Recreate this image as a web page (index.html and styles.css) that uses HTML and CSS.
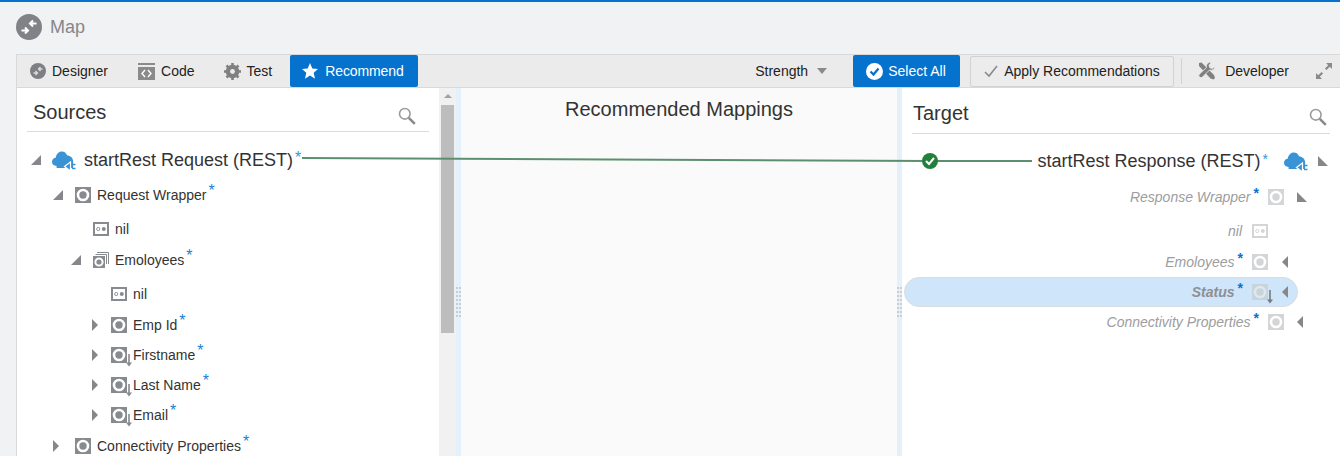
FILE: index.html
```html
<!DOCTYPE html>
<html lang="en">
<head>
<meta charset="utf-8">
<title>Map</title>
<link rel="stylesheet" href="styles.css">
</head>
<body>
<svg class="defs" width="0" height="0" aria-hidden="true">
  <defs>
    <symbol id="i-box" viewBox="0 0 16 16"><rect width="16" height="16" fill="currentColor"/><circle cx="8" cy="8" r="5" fill="currentColor" stroke="#fff" stroke-width="2.6"/></symbol>
    <symbol id="i-arrow" viewBox="0 0 22 22"><rect width="16" height="16" fill="currentColor"/><circle cx="8" cy="8" r="5" fill="currentColor" stroke="#fff" stroke-width="2.6"/><path d="M18 7v11" stroke="currentColor" stroke-width="1.6"/><path d="M15 15.5h6l-3 4z" fill="currentColor"/></symbol>
    <symbol id="i-arrow-f" viewBox="0 0 22 22"><rect width="16" height="16" fill="#c9d3dc"/><circle cx="8" cy="8" r="5" fill="#c9d3dc" stroke="#dfe7ee" stroke-width="2.6"/><path d="M18 6v12" stroke="#777b80" stroke-width="1.6"/><path d="M15 15.5h6l-3 4z" fill="#777b80"/></symbol>
    <symbol id="i-nil" viewBox="0 0 16 16"><rect x="1" y="2" width="14" height="12" fill="#fff" stroke="currentColor" stroke-width="2"/><circle cx="5.2" cy="8" r="1.6" fill="#fff" stroke="currentColor" stroke-width=".9"/><circle cx="10.8" cy="8" r="2" fill="currentColor"/></symbol>
    <symbol id="i-list" viewBox="0 0 16 16"><path d="M4 .5h11.500V12M2.500 2.500h11v9.500" fill="none" stroke="currentColor" stroke-width="1"/><rect y="4" width="12" height="12" fill="currentColor"/><circle cx="6" cy="10" r="3.600" fill="currentColor" stroke="#fff" stroke-width="2"/></symbol>
    <symbol id="i-cloud" viewBox="0 0 24 22"><path transform="translate(0 1.500) scale(.92 1)" d="M5 15.500C1.800 15.500 0 13.600 0 11.300 0 9 1.800 7.400 4 7.300 4.600 3.600 7.400 1 10.600 1c2.800 0 5 1.600 6 4.100 3.300 0 5.900 2.300 6.400 5.400v7H5z" fill="#3a93d5"/><path d="M12.500 17.500l6-4.500v9z" fill="#3a93d5" stroke="#fff" stroke-width="1.200"/><path d="M20 15.500h3.500M20 19.500h3.500" stroke="#3a93d5" stroke-width="1.500"/></symbol>
    <symbol id="i-search" viewBox="0 0 18 18"><circle cx="6.800" cy="6.800" r="5.300" fill="none" stroke="#9a9a9a" stroke-width="1.600"/><path d="M10.800 10.800l6 6" stroke="#8a8a8a" stroke-width="2.600"/></symbol>
  </defs>
</svg>
<div class="page">
  <header class="head">
    <svg class="map-icon" viewBox="0 0 26 26"><circle cx="13" cy="13" r="13" fill="#7f8286"/><path d="M5.500 16.500h6M9 13.500l3 3-3 3M20.500 9.500h-6M17 6.500l-3 3 3 3" fill="none" stroke="#fff" stroke-width="2"/></svg>
    <h1 class="title">Map</h1>
  </header>
  <section class="panel">
    <nav class="bar">
      <a class="tab tab-first"><svg class="t-icon" viewBox="0 0 16 16"><circle cx="8" cy="8" r="8" fill="#7d7f82"/><path d="M3.500 10h3.500M5.500 8l2 2-2 2M12.500 6H9M10.500 4l-2 2 2 2" fill="none" stroke="#ddd" stroke-width="1.300"/></svg>Designer</a>
      <a class="tab"><svg class="t-icon-w" viewBox="0 0 17 17"><rect x="0" y="0" width="17" height="2" fill="#8a8a8a"/><rect x="0" y="4" width="17" height="13" fill="#8a8a8a"/><path d="M7 7l-3 3.500 3 3.500M10 7l3 3.500-3 3.500" fill="none" stroke="#fff" stroke-width="1.400"/></svg>Code</a>
      <a class="tab tab-test"><svg class="t-icon-w" viewBox="0 0 17 17"><circle cx="8.500" cy="8.500" r="5" fill="none" stroke="#808080" stroke-width="3.600"/><path d="M8.500 0v17M0 8.500h17M2.500 2.500l12 12M14.500 2.500l-12 12" stroke="#808080" stroke-width="2.600"/><circle cx="8.500" cy="8.500" r="2.400" fill="#ebebeb"/></svg>Test</a>
      <a class="tab tab-on"><svg class="t-star" viewBox="0 0 16 16"><path d="M8 0l2.300 5.500 5.700.5-4.300 3.800 1.300 5.900L8 12.600l-5 3.100 1.300-5.900L0 6l5.700-.5z" fill="#fff"/></svg>Recommend</a>
      <div class="actions">
        <span class="strength">Strength<i class="drop"></i></span>
        <a class="btn-blue"><svg class="t-icon-w" viewBox="0 0 17 17"><circle cx="8.500" cy="8.500" r="8.500" fill="#fff"/><path d="M4.500 8.500l3 3 5-6" fill="none" stroke="#0572ce" stroke-width="2.200"/></svg>Select All</a>
        <a class="btn-line"><svg class="t-check" viewBox="0 0 14 14"><path d="M1 8l4 4 8-10" fill="none" stroke="#8a8a8a" stroke-width="1.600"/></svg>Apply Recommendations</a>
        <i class="sep"></i>
        <a class="dev"><svg class="t-tools" viewBox="0 0 18 18"><path d="M1 1l2.500-.5L16 13l1 3-1.500 1.500-3-1L1 4z" fill="#808080"/><path d="M17 4.500a4 4 0 0 1-5.500 3.500L4.500 15a2 2 0 0 1-3-3l7-6.500A4 4 0 0 1 13.500.5L11 3.200l.8 2.600 2.700.8z" fill="#808080" stroke="#ebebeb" stroke-width=".8"/></svg>Developer</a>
        <svg class="t-expand" viewBox="0 0 18 18"><path d="M11 1h6v6l-2.200-2.200-3.300 3.300-1.600-1.600 3.300-3.300zM7 17H1v-6l2.200 2.200 3.300-3.300 1.600 1.600-3.300 3.300z" fill="#8a8a8a"/></svg>
      </div>
    </nav>
    <div class="work">
      <div class="col-src">
        <div class="col-head"><h2 class="col-title">Sources</h2><svg class="search"><use href="#i-search"/></svg></div>
        <ul class="tree">
          <li class="row root"><span class="slot"><i class="down"></i></span><svg class="cloud"><use href="#i-cloud"/></svg><span class="root-name">startRest Request (REST)</span><b class="req req-root">*</b></li>
          <li class="row l1 gap-5"><span class="slot"><i class="down"></i></span><svg class="ico"><use href="#i-box"/></svg><span>Request Wrapper</span><b class="req">*</b></li>
          <li class="row l2 gap-4"><span class="slot"></span><svg class="ico"><use href="#i-nil"/></svg><span>nil</span></li>
          <li class="row l2 gap-1"><span class="slot"><i class="down"></i></span><svg class="ico"><use href="#i-list"/></svg><span>Emoloyees</span><b class="req">*</b></li>
          <li class="row l3 gap-4"><span class="slot"></span><svg class="ico"><use href="#i-nil"/></svg><span>nil</span></li>
          <li class="row l3 gap-1"><span class="slot"><i class="right"></i></span><svg class="ico"><use href="#i-box"/></svg><span>Emp Id</span><b class="req">*</b></li>
          <li class="row l3"><span class="slot"><i class="right"></i></span><svg class="ico-a"><use href="#i-arrow"/></svg><span>Firstname</span><b class="req">*</b></li>
          <li class="row l3"><span class="slot"><i class="right"></i></span><svg class="ico-a"><use href="#i-arrow"/></svg><span>Last Name</span><b class="req">*</b></li>
          <li class="row l3"><span class="slot"><i class="right"></i></span><svg class="ico-a"><use href="#i-arrow"/></svg><span>Email</span><b class="req">*</b></li>
          <li class="row l1 gap-1"><span class="slot"><i class="right"></i></span><svg class="ico"><use href="#i-box"/></svg><span>Connectivity Properties</span><b class="req">*</b></li>
        </ul>
      </div>
      <div class="scroll"><i class="up"></i><i class="thumb"></i></div>
      <div class="split"><i class="grip"></i></div>
      <div class="col-mid"><h2 class="mid-title">Recommended Mappings</h2></div>
      <div class="split split-r"><i class="grip"></i></div>
      <div class="col-tgt">
        <div class="col-head tgt-head"><h2 class="col-title">Target</h2><svg class="search"><use href="#i-search"/></svg></div>
        <ul class="tree tree-t">
          <li class="trow t-root"><span class="root-name">startRest Response (REST)</span><b class="req req-root">*</b><svg class="cloud cloud-t"><use href="#i-cloud"/></svg><span class="tslot"><i class="down"></i></span></li>
          <li class="trow t1 gap-6"><em>Response Wrapper</em><b class="req">*</b><svg class="ico fade"><use href="#i-box"/></svg><span class="tslot"><i class="down"></i></span></li>
          <li class="trow t2 gap-4"><em>nil</em><svg class="ico fade nil-t"><use href="#i-nil"/></svg><span class="tslot"></span></li>
          <li class="trow t2 gap-1"><em>Emoloyees</em><b class="req">*</b><svg class="ico fade"><use href="#i-box"/></svg><span class="tslot"><i class="left"></i></span></li>
          <li class="trow t2 pill"><em class="strong">Status</em><b class="req">*</b><svg class="ico-a fade-a"><use href="#i-arrow-f"/></svg><span class="tslot tslot-a"><i class="left"></i></span></li>
          <li class="trow t1"><em>Connectivity Properties</em><b class="req">*</b><svg class="ico fade"><use href="#i-box"/></svg><span class="tslot"><i class="left"></i></span></li>
        </ul>
      </div>
    </div>
    <svg class="links" viewBox="0 0 1340 456" aria-hidden="true">
      <path d="M302 158L930 161H1032" fill="none" stroke="#5d8f6f" stroke-width="2"/>
      <circle cx="930" cy="161" r="8" fill="#23803a"/>
      <path d="M926 161l3 3 5-6" fill="none" stroke="#fff" stroke-width="2"/>
    </svg>
  </section>
</div>
</body>
</html>
```

FILE: styles.css
```css
* { box-sizing: border-box; }
html, body { margin: 0; padding: 0; height: 456px; overflow: hidden; }
body { font-family: "Liberation Sans", Arial, sans-serif; font-size: 14px; color: #333; background: #f1f2f4; }
.defs { display: block; height: 0; }
.page { height: 456px; border-top: 2px solid #0572ce; display: flex; flex-direction: column; }
.head { height: 52px; padding: 12px 0 0 16px; display: flex; align-items: flex-start; gap: 8px; flex: none; }
.map-icon { width: 26px; height: 26px; flex: none; }
.title { margin: 0; font-size: 18px; font-weight: 400; line-height: 26px; color: #85878b; }
.panel { position: relative; flex: 1; margin-left: 16px; border-top: 1px solid #d9d9d9; border-left: 1px solid #d9d9d9; display: flex; flex-direction: column; min-height: 0; }
.bar { height: 33px; flex: none; background: #ebebeb; border-bottom: 1px solid #d9d9d9; display: flex; align-items: stretch; font-size: 14px; color: #222; }
.tab { display: flex; align-items: center; gap: 6px; margin-left: 30px; height: 32px; }
.tab-first { margin-left: 13px; }
.tab-test { margin-left: 29px; }
.tab-on { margin-left: 18px; width: 128px; background: #0572ce; color: #fff; padding-left: 12px; gap: 7px; border-radius: 2px; letter-spacing: -0.1px; }
.t-icon { width: 16px; height: 16px; flex: none; }
.t-icon-w { width: 17px; height: 17px; flex: none; }
.t-star { width: 16px; height: 16px; flex: none; }
.actions { margin-left: auto; display: flex; align-items: center; height: 32px; padding-right: 7px; }
.strength { display: flex; align-items: center; gap: 9px; margin-right: 26px; }
.drop { width: 0; height: 0; border-left: 5px solid transparent; border-right: 5px solid transparent; border-top: 6px solid #8a8a8a; }
.btn-blue { height: 32px; width: 107px; background: #0572ce; color: #fff; display: flex; align-items: center; gap: 5px; padding-left: 13px; border-radius: 2px; }
.btn-line { height: 31px; width: 204px; margin-left: 10px; border: 1px solid #d2d2d2; background: #ececec; border-radius: 2px; display: flex; align-items: center; gap: 6px; padding-left: 13px; }
.t-check { width: 14px; height: 14px; flex: none; }
.sep { width: 1px; height: 26px; background: #d2d2d2; margin-left: 7px; }
.dev { display: flex; align-items: center; gap: 9px; margin-left: 16px; }
.t-tools { width: 18px; height: 18px; flex: none; }
.t-expand { width: 18px; height: 18px; margin-left: 26px; flex: none; }
.work { flex: 1; display: flex; min-height: 0; background: #fff; overflow: hidden; }
.col-src { width: 422px; flex: none; }
.col-head { margin: 0 10px; height: 44px; border-bottom: 1px solid #d9dde1; display: flex; align-items: center; justify-content: space-between; padding: 4px 13px 0 6px; }
.col-title { margin: 0; font-size: 20px; font-weight: 400; color: #333; line-height: 24px; }
.search { width: 18px; height: 18px; flex: none; margin-top: 8px; }
.tree { list-style: none; margin: 0; padding: 13px 0 0; }
.row { display: flex; align-items: center; height: 30px; }
.root { padding-left: 14px; }
.gap-6 { margin-top: 6px; }
.gap-5 { margin-top: 5px; }
.gap-4 { margin-top: 4px; }
.gap-1 { margin-top: 1px; }
.l1 { padding-left: 36px; }
.l2 { padding-left: 54px; }
.l3 { padding-left: 72px; }
.slot { width: 22px; flex: none; display: flex; align-items: center; }
.root .slot { width: 21px; }
.l3 .slot { padding-left: 3px; }
.down { width: 0; height: 0; border-left: 10px solid transparent; border-bottom: 10px solid #85878b; }
.right { width: 0; height: 0; border-left: 6px solid #85878b; border-top: 6px solid transparent; border-bottom: 6px solid transparent; }
.left { width: 0; height: 0; border-right: 6px solid #85878b; border-top: 6px solid transparent; border-bottom: 6px solid transparent; }
.cloud { width: 24px; height: 22px; flex: none; margin-right: 8px; }
.root-name { font-size: 18px; color: #333; }
.ico { width: 16px; height: 16px; flex: none; margin-right: 6px; color: #878a8e; }
.ico-a { width: 22px; height: 22px; flex: none; color: #878a8e; margin-bottom: -6px; }
.req { font-weight: 400; font-size: 16px; color: #1a7fd4; margin: 0 0 8px 2px; line-height: 14px; }
.req-root { color: #3a93d5; margin-bottom: 4px; }
.scroll { width: 17px; flex: none; background: #f1f1f1; display: flex; flex-direction: column; align-items: center; padding-top: 6px; }
.up { width: 0; height: 0; border-left: 4px solid transparent; border-right: 4px solid transparent; border-bottom: 4px solid #a3a3a3; }
.thumb { width: 13px; height: 228px; background: #bdbdbd; margin-top: 7px; }
.split { width: 5px; flex: none; background: #e4f0fa; padding-top: 199px; }
.grip { display: block; width: 5px; height: 31px; background-image: radial-gradient(circle at 1px 1px, #c9ced3 1.4px, transparent 1.500px); background-size: 3px 4px; }
.col-mid { width: 436px; flex: none; background: #fafafa; }
.mid-title { margin: 0; padding-top: 9px; font-size: 20px; font-weight: 400; line-height: 24px; text-align: center; color: #333; }
.col-tgt { flex: 1; min-width: 0; }
.tgt-head { height: 46px; margin-right: 10px; padding-left: 1px; padding-right: 3px; }
.tree-t { padding-top: 12px; }
.trow { display: flex; align-items: center; justify-content: flex-end; height: 30px; color: #9b9da1; }
.trow em { font-style: italic; }
.trow .down { border-left: 0; border-right: 10px solid transparent; }
.trow .req { font-weight: 700; font-size: 14px; color: #0572ce; }
.t-root { padding-right: 12px; }
.t1 { padding-right: 33px; }
.t2 { padding-right: 48px; }
.t1 .req, .t2 .req { margin-left: 3px; margin-right: 0; }
.trow .ico { margin: 0 0 0 9px; }
.t-root .req-root { margin-left: 2px; font-weight: 400; color: #3a93d5; margin-bottom: 4px; }
.cloud-t { margin: 0 0 0 16px; }
.tslot { width: 10px; flex: none; margin-left: 14px; display: flex; align-items: center; }
.t1 .tslot { margin-left: 13px; }
.t-root .tslot { margin-left: 10px; }
.tslot-a { margin-left: 8px; }
.trow .nil-t { margin-left: 10px; }
.fade { color: #d4d5d7; }
.fade-a { margin-left: 9px; }
.pill { margin: 0 42px 0 2px; padding-right: 5px; background: #cfe5f9; border: 1px solid #d8dde1; border-radius: 15px; }
.strong { font-weight: 700; color: #8d8f93; }
.links { position: absolute; left: -17px; top: -55px; width: 1340px; height: 456px; pointer-events: none; }
```
